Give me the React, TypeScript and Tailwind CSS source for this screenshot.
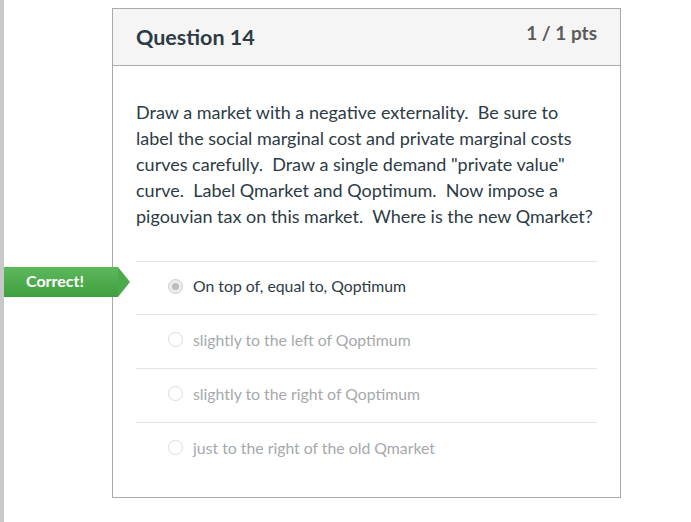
export default function App() {
  const answers = [
    { text: "On top of, equal to, Qoptimum", selected: true },
    { text: "slightly to the left of Qoptimum", selected: false },
    { text: "slightly to the right of Qoptimum", selected: false },
    { text: "just to the right of the old Qmarket", selected: false },
  ];

  return (
    <div className="w-[691px] h-[522px] bg-white flex font-['Lato',sans-serif] overflow-hidden">
      <div className="w-[4px] h-full bg-[#c8c8c8] shrink-0" />
      <div className="relative flex-1 pl-[108px] pt-[8px]">
        <div className="w-[509px] h-[490px] border border-[#aaaaaa] bg-white">
          {/* Header */}
          <div className="h-[57px] bg-[#f5f5f5] border-b border-[#aaaaaa] flex justify-between px-[23px]">
            <h2 className="text-[21.5px] font-bold text-[#2d3b45] pt-[18px] leading-none">Question 14</h2>
            <span className="text-[19px] font-bold text-[#5b5b5b] pt-[14px] leading-none">1 / 1 pts</span>
          </div>

          {/* Body */}
          <div className="px-[23px] pt-[33px]">
            <p className="text-[18px] leading-[26px] text-[#2d3b45]">
              Draw a market with a negative externality.&nbsp; Be sure to label the social marginal cost and private
              marginal costs curves carefully.&nbsp; Draw a single demand "private value" curve.&nbsp; Label Qmarket and
              Qoptimum.&nbsp; Now impose a pigouvian tax on this market.&nbsp; Where is the new Qmarket?
            </p>

            <div className="mt-[32px]">
              {answers.map((a, i) => (
                <div
                  key={a.text}
                  className={
                    i === 0
                      ? "h-[53px] border-t border-[#e4e4e4] flex items-center pl-[32px] pb-[4px]"
                      : "h-[54px] border-t border-[#e4e4e4] flex items-center pl-[32px] pb-[4px]"
                  }
                >
                  {a.selected ? (
                    <span className="w-[15px] h-[15px] rounded-full border border-[#cfcfcf] bg-[#ececec] flex items-center justify-center">
                      <span className="w-[7px] h-[7px] rounded-full bg-[#bdbdbd]" />
                    </span>
                  ) : (
                    <span className="w-[15px] h-[15px] rounded-full border border-[#dcdcdc] bg-white" />
                  )}
                  <span
                    className={
                      a.selected
                        ? "ml-[10px] text-[15.8px] text-[#2d3b45]"
                        : "ml-[10px] text-[15.8px] text-[#a5a9ad]"
                    }
                  >
                    {a.text}
                  </span>
                </div>
              ))}
            </div>
          </div>
        </div>

        {/* Correct! flag */}
        <div className="absolute left-0 top-[267px] flex">
          <div className="w-[114px] h-[30px] bg-gradient-to-b from-[#5cb85c] to-[#3f9f3f] flex items-center pl-[22px] pb-[2px]">
            <span className="text-[16px] font-bold text-white">Correct!</span>
          </div>
          <div className="w-0 h-0 border-y-[15px] border-y-transparent border-l-[12px] border-l-[#4aab4a]" />
        </div>
      </div>
    </div>
  );
}
